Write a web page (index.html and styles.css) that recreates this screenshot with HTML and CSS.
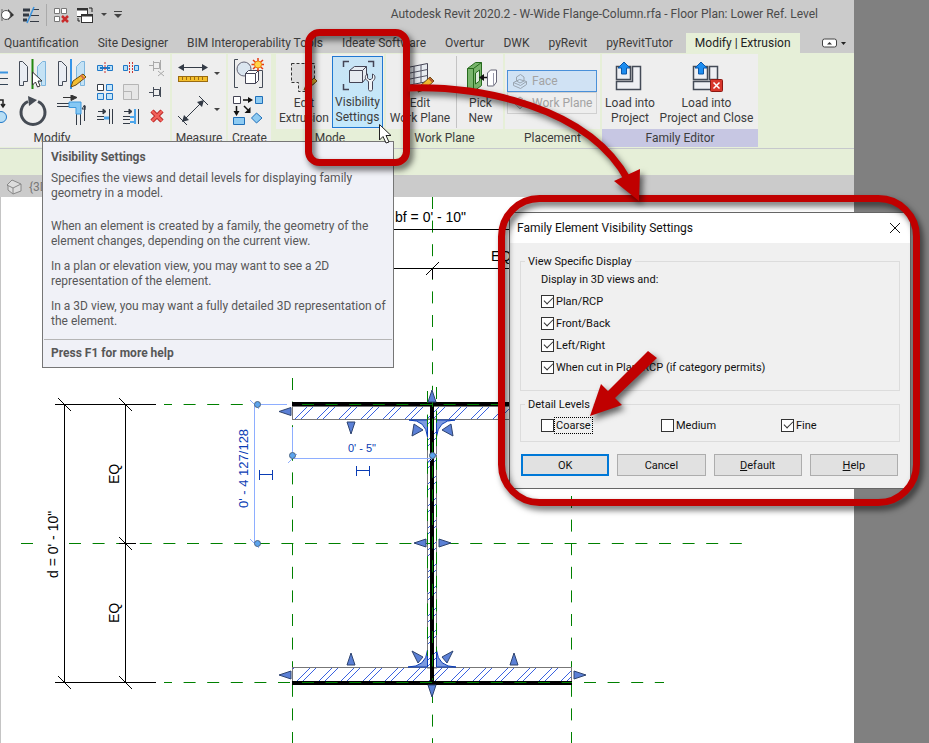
FILE: index.html
```
<!DOCTYPE html>
<html lang="en">
<head>
  <meta charset="UTF-8">
  <meta name="viewport" content="width=device-width, initial-scale=1.0">
  <title>Autodesk Revit 2020.2 - Family Element Visibility Settings</title>
  <link rel="stylesheet" href="styles.css">
</head>
<body>

<div class="app">
  <header class="titlebar">
    <div class="quick-access">
      <button class="icon-btn" aria-label="Section">
        <svg width="16" height="18" viewBox="0 0 16 18"><path d="M2 3v12" stroke="#666"/><path d="M8 3l6 6-6 5z" fill="#333"/><circle cx="6" cy="9" r="4.500" fill="#fff" stroke="#555"/></svg>
      </button>
      <button class="icon-btn" aria-label="Thin lines">
        <svg width="18" height="18" viewBox="0 0 18 18"><path d="M1 4h7M1 9h6M1 14h4" stroke="#333a44" stroke-width="3"/><path d="M11 3.500h6M9 9.500h8M8 15.500h9" stroke="#333a44"/><path d="M12 1L5 17" stroke="#3b94e0" stroke-width="1.500"/></svg>
      </button>
      <span class="bar-sep"></span>
      <button class="icon-btn" aria-label="Close inactive views">
        <svg width="18" height="18" viewBox="0 0 18 18"><g fill="#fff" stroke="#777"><path d="M1.500 2.500h5v5h-5zM8.500 2.500h5v5h-5zM1.500 10.500h5v5h-5z"/></g><path d="M9 10l6 6M15 10l-6 6" stroke="#c92b2b" stroke-width="2.500"/></svg>
      </button>
      <button class="icon-btn" aria-label="Switch windows">
        <svg width="18" height="18" viewBox="0 0 18 18"><rect x="-.5" y="2.500" width="11" height="8" fill="#fff" stroke="#333"/><path d="M-1 3.500h12" stroke="#333" stroke-width="2"/><rect x="4.500" y="8.500" width="11" height="8" fill="#fff" stroke="#333"/><path d="M4 9.500h12" stroke="#333" stroke-width="2"/><path d="M12 2h3v4M1 12v3h2" fill="none" stroke="#222"/></svg>
      </button>
      <span class="caret"></span>
      <svg width="10" height="8" viewBox="0 0 10 8"><path d="M1 .5h8" stroke="#444"/><path d="M1 3h8L5 7z" fill="#444"/></svg>
    </div>
    <div class="window-title">Autodesk Revit 2020.2 - W-Wide Flange-Column.rfa - Floor Plan: Lower Ref. Level</div>
  </header>

  <nav class="tabs">
    <a href="#">Quantification</a>
    <a href="#">Site Designer</a>
    <a href="#">BIM Interoperability Tools</a>
    <a href="#">Ideate Software</a>
    <a href="#">Overtur</a>
    <a href="#">DWK</a>
    <a href="#">pyRevit</a>
    <a href="#">pyRevitTutor</a>
    <a href="#" class="active">Modify | Extrusion</a>
    <button class="icon-btn ribbon-toggle" aria-label="Minimize ribbon">
      <svg width="26" height="10" viewBox="0 0 26 10"><rect x=".5" y="1" width="14" height="8" rx="2" fill="#fff" stroke="#444"/><path d="M5 6.500L7.500 4 10 6.500z" fill="#333"/><path d="M19 4h5l-2.500 3z" fill="#222"/></svg>
    </button>
  </nav>

  <div class="ribbon">
    <section class="panel panel-modify">
      <div class="panel-body">
        <div class="tool-col cut">
          <button class="tool" aria-label="Align"><svg width="8" height="32" viewBox="0 0 8 32"><path d="M0 14.500h8" stroke="#3b94e0" stroke-width="2"/><path d="M0 20.500h8M0 26.500h8" stroke="#345"/></svg></button>
          <button class="tool" aria-label="Copy"><svg width="8" height="32" viewBox="0 0 8 32"><path d="M0 5h3v6M1 9l2 3 2-3" fill="none" stroke="#222" stroke-width="1.500"/><circle cx="1" cy="22" r="5.500" fill="#b8def5" stroke="#1f78c8"/></svg></button>
        </div>
        <div class="tool-col">
          <button class="tool" aria-label="Mirror pick axis"><svg width="32" height="32" viewBox="0 0 32 32"><path d="M3.500 3.500h3l5 5v15h-4v4h-4z" fill="#e9edf3" stroke="#444b57"/><path d="M29.500 3.500h-3l-5 5v15h4v4h4z" fill="#c4e2f5" stroke="#7db5dd"/><path d="M16.500 1v30" stroke="#23890f" stroke-width="2"/><path d="M16.500 14v13l3-3 2 5 2.500-1-2-5h4z" fill="#fff" stroke="#333"/></svg></button>
          <button class="tool" aria-label="Rotate"><svg width="32" height="32" viewBox="0 0 32 32"><path d="M22 6.500a12 12 0 1 1-10 0" fill="none" stroke="#454b54" stroke-width="3"/><path d="M12 1l9 4-8 6z" fill="#454b54"/></svg></button>
        </div>
        <div class="tool-col">
          <button class="tool" aria-label="Mirror draw axis"><svg width="32" height="32" viewBox="0 0 32 32"><path d="M4.500 3.500h3l5 5v15h-4v4h-4z" fill="#e9edf3" stroke="#444b57"/><path d="M30.500 3.500h-3l-5 5v15h4v4h4z" fill="#c4e2f5" stroke="#7db5dd"/><path d="M17 1v30" stroke="#3594e8" stroke-width="2"/><path d="M17 29l2-6 10-7 3 3-10 8z" fill="#f3bd31" stroke="#6b4a12"/><path d="M27 17l3 4" stroke="#d46a4a" stroke-width="2"/></svg></button>
          <button class="tool" aria-label="Trim"><svg width="32" height="32" viewBox="0 0 32 32"><path d="M9 2.500h11M17 0l6 2.500-6 3z" fill="#333" stroke="#333"/><path d="M3 8.500h12M3 11.500h12M22.500 18v12M26.500 18v12M30.500 26V11M28 14l2.500-4 2 4z" fill="none" stroke="#333b46"/><path d="M15 7h12v12h-5v-6.500h-7z" fill="#86c8f4" stroke="#3c98dd"/></svg></button>
        </div>
        <div class="tool-grid">
          <button class="tool" aria-label="Split element"><svg width="18" height="18" viewBox="0 0 18 18"><path d="M1.500 6.500h5v5h-5zM11.500 6.500h5v5h-5z" fill="#b8def5" stroke="#1f78c8"/><path d="M4 9h10" stroke="#1f78c8" stroke-width="2"/><path d="M9 3v12" stroke="#c33" stroke-dasharray="2 1"/></svg></button>
          <button class="tool" aria-label="Split with gap"><svg width="18" height="18" viewBox="0 0 18 18"><path d="M1.500 6.500h4v5h-4zM12.500 6.500h4v5h-4z" fill="#b8def5" stroke="#1f78c8"/><path d="M7.500 3v12M10.500 3v12" stroke="#c33" stroke-dasharray="2 1"/></svg></button>
          <button class="tool" aria-label="Unpin"><svg width="18" height="18" viewBox="0 0 18 18"><path d="M1 6.500h4M5.500 2v10M5.500 3.500h6v6h-6M12.500 1v10M10 12l6 5M16 12l-6 5" fill="none" stroke="#aaa"/></svg></button>
          <button class="tool" aria-label="Array"><svg width="18" height="18" viewBox="0 0 18 18"><path d="M1.500 1.500h6v6h-6z" fill="#fff" stroke="#333b46"/><path d="M10.500 1.500h6v6h-6zM1.500 10.500h6v6h-6zM10.500 10.500h6v6h-6z" fill="#c4e5fa" stroke="#1f78c8"/></svg></button>
          <button class="tool" aria-label="Scale"><svg width="18" height="18" viewBox="0 0 18 18"><path d="M1.500 1.500h15v15h-15zM1.500 8.500h8v8" fill="#e6e6e6" stroke="#b5b5b5"/></svg></button>
          <button class="tool" aria-label="Pin"><svg width="18" height="18" viewBox="0 0 18 18"><path d="M1 9.500h4M5.500 4v10M5.500 6.500h6v6h-6M12.500 4v10" fill="none" stroke="#444b57"/></svg></button>
          <button class="tool" aria-label="Trim single"><svg width="18" height="18" viewBox="0 0 18 18"><path d="M2 4.500h7M7 2l3 2.500L7 7zM13.500 2v15M16.500 2v15M1 9.500h7M1 12.500h7" fill="#333" stroke="#333b46"/><path d="M8 11h5" stroke="#4ca5ea" stroke-width="3"/></svg></button>
          <button class="tool" aria-label="Trim multiple"><svg width="18" height="18" viewBox="0 0 18 18"><path d="M2 4.500h7M7 2l3 2.500L7 7zM13.500 2v15M16.500 2v15M1 9.500h7M1 12.500h7M1 16.500h7" fill="#333" stroke="#333b46"/><path d="M8 10h5M8 15h5M13 2v15" stroke="#4ca5ea" stroke-width="2"/></svg></button>
          <button class="tool" aria-label="Delete"><svg width="18" height="18" viewBox="0 0 18 18"><path d="M4 4l10 10M14 4L4 14" stroke="#b51f1f" stroke-width="4.500"/><path d="M4 4l10 10M14 4L4 14" stroke="#f0605a" stroke-width="2.500"/></svg></button>
        </div>
      </div>
      <h2>Modify</h2>
    </section>

    <section class="panel panel-measure">
      <div class="panel-body">
        <div class="tool-col">
          <button class="tool" aria-label="Measure"><svg width="32" height="32" viewBox="0 0 32 32"><path d="M5 9.500h22" stroke="#333b46"/><path d="M1 9.500l6-3.500v7zM31 9.500l-6-3.500v7z" fill="#333b46"/><rect x="1.500" y="18.500" width="29" height="5" fill="#f4bf2b" stroke="#9a6b10"/><path d="M5.500 19v3M9.500 19v3M13.500 19v3M17.500 19v3M21.500 19v3M25.500 19v3" stroke="#9a6b10"/></svg></button>
          <button class="tool" aria-label="Aligned dimension"><svg width="32" height="32" viewBox="0 0 32 32"><path d="M7 25L25 7M1 21l9 9M22 1l9 9" stroke="#333b46"/><path d="M5 27l2-7 5 5zM27 5l-2 7-5-5z" fill="#333b46"/></svg></button>
        </div>
        <div class="tool-col caret-col">
          <span class="caret"></span>
          <span class="caret"></span>
        </div>
      </div>
      <h2>Measure</h2>
    </section>

    <section class="panel panel-create">
      <div class="panel-body">
        <div class="tool-col">
          <button class="tool" aria-label="Create similar"><svg width="32" height="32" viewBox="0 0 32 32"><path d="M6 1.500H2.500v28H6M27 12.500h3.500v17H27" fill="none" stroke="#444b57"/><circle cx="12" cy="11" r="7" fill="#dbe6f0" stroke="#667"/><path d="M13.500 15.500l3-3h10v10l-3 3h-10z" fill="#fff" stroke="#445"/><path d="M13.500 15.500h10v10M23.500 15.500l3-3" fill="none" stroke="#445"/><path d="M26 0v13M19.500 6.500h13M21 2l10 9M31 2l-10 9" stroke="#e63b12" stroke-width="1.500"/><circle cx="26" cy="6.500" r="3.500" fill="#ffd54a" stroke="#ee8012"/></svg></button>
          <button class="tool" aria-label="Create group"><svg width="32" height="32" viewBox="0 0 32 32"><path d="M1.500 1.500h7v7h-7z" fill="#fff" stroke="#445"/><path d="M23.500 1.500h7v7h-7zM1.500 22.500h11v7h-11zM24.500 18l5.500 5-5.500 5-5-5z" fill="#8ecbf2" stroke="#1f6fb8"/><path d="M11 5h6M4.500 11v6M12 11l4 4" stroke="#111" stroke-width="1.500"/><path d="M16 2l5 3-5 3zM1.500 16h6l-3 5zM18.500 12v6h-6z" fill="#111"/></svg></button>
        </div>
      </div>
      <h2>Create</h2>
    </section>

    <section class="panel panel-mode green">
      <div class="panel-body">
        <button class="big-tool edit-extrusion">
          <svg width="32" height="32" viewBox="0 0 32 32"><path d="M3.500 2.500h23v21h-7v7h-9v-9h-7z" fill="#ddd" stroke="#333" stroke-dasharray="3 2"/><path d="M16 29l2-5 8-7 3 3-8 7z" fill="#f3bd31" stroke="#6b4a12"/></svg>
          <span>Edit<br>Extrusion</span>
        </button>
        <button class="big-tool selected visibility">
          <svg width="36" height="32" viewBox="0 0 36 32"><path d="M3.500 7V1.500H9M28 1.500h5.500V7M3.500 24v5.500H9" fill="none" stroke="#445" stroke-width="1.500"/><path d="M9.500 10.500l5-4h12v11l-4 5h-13z" fill="#e6ebf1" stroke="#445"/><path d="M9.500 10.500h13v12M22.500 10.500l4-4" fill="none" stroke="#445"/><path d="M27.500 14v4l1.500 1.500h2l1.500-1.500v-4c3 1 3.500 5 0 7.500v8c0 2-4 2-4 0v-8c-4-2-4-6-1-7.500z" fill="#f1f4f7" stroke="#445"/></svg>
          <span>Visibility<br>Settings</span>
        </button>
      </div>
      <h2>Mode</h2>
    </section>

    <section class="panel panel-workplane green">
      <div class="panel-body">
        <button class="big-tool edit-plane">
          <svg width="32" height="32" viewBox="0 0 32 32"><path d="M3.500 6.500l20-4v18l-20 4z" fill="#e7ebf0" stroke="#445"/><path d="M10 5v18M17 4v18M3.500 12.500l20-4M3.500 18.500l20-4" stroke="#556"/><path d="M14 31l2-6 10-9 4 4-10 9z" fill="#f3bd31" stroke="#6b4a12"/><path d="M25 17l4 4" stroke="#b35a30" stroke-width="2"/></svg>
          <span>Edit<br>Work Plane</span>
        </button>
        <span class="panel-sep"></span>
        <button class="big-tool pick-new">
          <svg width="32" height="32" viewBox="0 0 32 32"><path d="M2.500 7.500l8-6h6v23l-8 6h-6z" fill="#79b56c" stroke="#256a1d"/><path d="M2.500 7.500h6v23M8.500 7.500l8-6" fill="none" stroke="#256a1d"/><path d="M10.500 12l4-3v11l-4 3z" fill="#dce8da" stroke="#256a1d"/><path d="M16 16.500h6" stroke="#111" stroke-width="1.500"/><path d="M14 16.500l5-3.500v7z" fill="#111"/><path d="M22.500 12l3-3h6v12l-3 4h-6z" fill="#fff" stroke="#667"/><path d="M28.500 12v12" stroke="#99a"/></svg>
          <span>Pick<br>New</span>
        </button>
      </div>
      <h2>Work Plane</h2>
    </section>

    <section class="panel panel-placement green">
      <div class="panel-body">
        <button class="wide-tool on" disabled>
          <svg width="16" height="16" viewBox="0 0 16 16"><path d="M1.500 9.500l6-3 7 2-6 4zM1.500 9.500v3l7 3 6-4v-3M4.500 8V4l4-2.500L12 4v4l-4 2z" fill="none" stroke="#9aa5b0"/></svg>
          Face
        </button>
        <button class="wide-tool" disabled>
          <svg width="16" height="16" viewBox="0 0 16 16"><path d="M1 7l7-5 7 5-7 7z" fill="#ccc" stroke="#aaa"/><path d="M4 5l8 6M12 4l-8 6" stroke="#eee"/></svg>
          Work Plane
        </button>
      </div>
      <h2>Placement</h2>
    </section>

    <section class="panel panel-family">
      <div class="panel-body">
        <button class="big-tool load">
          <svg width="32" height="32" viewBox="0 0 32 32"><path d="M2.500 5.500h14v13h-14zM2.500 20.500h16v-15h8v23h-24z" fill="#eef0f4" stroke="#444b57" stroke-width="1.500"/><path d="M10 1l6 6h-3.500v6h-5V7H4z" fill="#1c8df0" stroke="#0b57a8"/></svg>
          <span>Load into<br>Project</span>
        </button>
        <button class="big-tool load-close">
          <svg width="32" height="32" viewBox="0 0 32 32"><path d="M2.500 5.500h14v13h-14zM18.500 5.500h8v13h-8zM2.500 20.500h24v8h-24z" fill="#eef0f4" stroke="#444b57" stroke-width="1.500"/><path d="M10 1l6 6h-3.500v6h-5V7H4z" fill="#1c8df0" stroke="#0b57a8"/><rect x="19.500" y="18.500" width="12" height="12" rx="1" fill="#d8362b" stroke="#8d1812"/><path d="M22.500 21.500l6 6M28.500 21.500l-6 6" stroke="#fff" stroke-width="1.500"/></svg>
          <span>Load into<br>Project and Close</span>
        </button>
      </div>
      <h2>Family Editor</h2>
    </section>
  </div>

  <div class="options-bar"></div>

  <div class="view-tabs">
    <svg width="16" height="16" viewBox="0 0 16 16"><path d="M1 6l5-5 9 4v7l-8 3-5-4V7z" fill="#ddd" stroke="#888"/><path d="M1 6l6 3 8-4M7 9v6" fill="none" stroke="#888"/></svg>
    <span>{3D}</span>
  </div>

  <main class="drawing">
    <svg width="854" height="546" viewBox="0 197 854 546">
      <defs>
        <pattern id="hatch" width="22" height="22" patternUnits="userSpaceOnUse">
          <path d="M-1 11L11-1M9 23L23 9M-1 17L17-1M15 23l8-8" class="hatch-line"/>
        </pattern>
      </defs>

      <!-- reference planes -->
      <g class="plane">
        <path d="M21 543.500h13M69 543.500h673"/>
        <path d="M160 404.500h94M160 682.500h134" class="from-dim"/>
        <path d="M584 682.500h80M292.500 378v365M571.500 496v247M432.500 197v193M432.500 691v52"/>
      </g>

      <!-- column section -->
      <rect x="292.500" y="406.500" width="279" height="13" class="flange"/>
      <rect x="292.500" y="667.500" width="279" height="14" class="flange"/>
      <rect x="427.500" y="419" width="9" height="249" class="flange"/>
      <path d="M409 420q17 0 18.500 17v-17zM455 420q-17 0-18.500 17v-17zM408 667q18 0 19.500-17v17zM456 667q-18 0-19.500-17v17z" class="fillet"/>
      <path d="M292 404h280M292 683h280M432 404v279" stroke="#000" stroke-width="4"/>
      <g class="plane">
        <path d="M302 404.500h270M302 682.500h270M432.500 395v285M427.500 391v265M436.500 387v265"/>
      </g>

      <!-- permanent dimensions -->
      <g class="dim">
        <path d="M64.500 404v279M125.500 404v279M55 404.500h101M55 682.500h101M119 543.500h17"/>
        <path d="M58 398l13 13M119 398l13 13M119 537l13 13M58 676l13 13M119 676l13 13M426 275l13-13"/>
        <path d="M380 229.500h180M380 268.500h180M432.500 268v11"/>
      </g>
      <g class="dim-text">
        <text x="395" y="222">bf = 0' - 10"</text>
        <text x="491" y="261">EQ</text>
        <text transform="translate(119 484) rotate(-90)">EQ</text>
        <text transform="translate(119 623) rotate(-90)">EQ</text>
        <text transform="translate(58 578) rotate(-90)">d = 0' - 10"</text>
      </g>

      <!-- temporary dimensions -->
      <g class="temp-dim">
        <path d="M254.500 404v140M254 404.500h33M292.500 427v31M292 458.500h141M250 400l9 9M250 539l9 9M288 463l9-9M428 463l9-9"/>
        <circle cx="257.500" cy="404.500" r="3"/>
        <circle cx="257.500" cy="543.500" r="3"/>
        <circle cx="292.500" cy="455.500" r="3"/>
        <circle cx="432.500" cy="455.500" r="3"/>
      </g>
      <path d="M259.500 470v10M272.500 470v10M260 474.500h12M356.500 466v10M369.500 466v10M357 470.500h12" stroke="#0a3cb4"/>
      <text class="temp-text" transform="translate(248 508) rotate(-90)">0' - 4 127/128</text>
      <text class="temp-text small" x="348" y="452">0' - 5"</text>

      <!-- shape handles -->
      <path class="handle" d="M279 411.500l12-4v8zM432 390l4 12h-8zM347 422h8l-4 12zM412 436l2-12 9 6zM453 436l-2-12-9 6zM414 543l12-4v8zM451 543l-12-4v8zM279 675l12-4v8zM586 675l-12-4v8zM351 653l4 12h-8zM514 653l4 12h-8zM412 651l11 6-5 6zM453 651l-11 6 5 6zM428 685h8l-4 12z"/>
    </svg>
  </main>
</div>

<aside class="help-tip">
  <h3>Visibility Settings</h3>
  <p class="lead">Specifies the views and detail levels for displaying family geometry in a model.</p>
  <p>When an element is created by a family, the geometry of the element changes, depending on the current view.</p>
  <p>In a plan or elevation view, you may want to see a 2D representation of the element.</p>
  <p>In a 3D view, you may want a fully detailed 3D representation of the element.</p>
  <footer>Press F1 for more help</footer>
</aside>

<form class="dialog" role="dialog" aria-labelledby="dialog-title">
  <div class="dialog-head">
    <span id="dialog-title">Family Element Visibility Settings</span>
    <button type="button" class="icon-btn" aria-label="Close">
      <svg width="12" height="12" viewBox="0 0 12 12"><path d="M1 1l10 10M11 1L1 11" stroke="#111"/></svg>
    </button>
  </div>
  <div class="dialog-body">
    <fieldset class="display-set">
      <legend>View Specific Display</legend>
      <p>Display in 3D views and:</p>
      <label><input type="checkbox" checked><span>Plan/RCP</span></label>
      <label><input type="checkbox" checked><span>Front/Back</span></label>
      <label><input type="checkbox" checked><span>Left/Right</span></label>
      <label><input type="checkbox" checked><span>When cut in Plan/RCP (if category permits)</span></label>
    </fieldset>
    <fieldset class="detail-set">
      <legend>Detail Levels</legend>
      <label><input type="checkbox"><span class="focused">Coarse</span></label>
      <label><input type="checkbox"><span>Medium</span></label>
      <label><input type="checkbox" checked><span>Fine</span></label>
    </fieldset>
    <div class="dialog-buttons">
      <button type="button" class="primary">OK</button>
      <button type="button">Cancel</button>
      <button type="button"><u>D</u>efault</button>
      <button type="button"><u>H</u>elp</button>
    </div>
  </div>
</form>

<!-- red callouts and mouse pointer -->
<svg class="callouts" width="929" height="743" viewBox="0 0 929 743">
  <g class="callout">
    <rect x="308.500" y="32.500" width="98" height="130" rx="11"/>
    <rect x="501.500" y="198.500" width="415" height="304" rx="38"/>
  </g>
  <g class="callout">
    <path d="M408 88C480 86 588 106 628 180"/>
    <path class="head" d="M640 169l-26 12 25 20z"/>
  </g>
  <path class="callout head" d="M590 416l11-32 7 7 40-40 9 7-42 40 7 7z"/>
  <path d="M379.500 124.500v15.500l3.500-3.500 3 6.500 3-1-3-6.500h5z" fill="#fff" stroke="#222"/>
</svg>

</body>
</html>
```
FILE: styles.css
```
* {
  box-sizing: border-box;
}

body {
  margin: 0;
  position: relative;
  height: 100vh;
  overflow: hidden;
  background: #808080;
  color: #3c3c3c;
  font-family: Roboto, "Segoe UI", sans-serif;
  font-size: 12px;
  line-height: 15px;
}

svg {
  display: block;
  fill: none;
  flex: none;
}

button {
  font: inherit;
  color: inherit;
  padding: 0;
  border: 0;
  background: none;
}

h2, h3, p {
  margin: 0;
}

.app {
  display: flex;
  flex-direction: column;
  height: 100%;
  margin-right: 75px;
  background: #cbcbcb;
}

/* title bar */
.titlebar {
  display: flex;
  justify-content: space-between;
  align-items: center;
  height: 33px;
  padding: 0 36px 4px 0;
}

.quick-access {
  display: flex;
  align-items: center;
  gap: 6px;
}

.bar-sep {
  width: 1px;
  height: 22px;
  background: #aaa;
}

.window-title {
  color: #4a4a4a;
  white-space: nowrap;
}

.caret {
  width: 0;
  border: 3px solid transparent;
  border-top-color: #444;
  border-bottom: 0;
}

/* ribbon tabs */
.tabs {
  display: flex;
  height: 20px;
  padding-right: 6px;
}

.tabs a {
  padding: 3px 9px 0 10px;
  color: #3c3c3c;
  text-decoration: none;
  white-space: nowrap;
}

.tabs a:first-child {
  padding-left: 4px;
}

.tabs .active {
  margin-left: 4px;
  padding: 3px 9px 0;
  background: #e6efd8;
  color: #222;
}

.ribbon-toggle {
  margin-left: auto;
}

/* ribbon */
.ribbon {
  display: flex;
  gap: 2px;
  height: 96px;
  padding-top: 1px;
  background: #e6efd8;
  border-bottom: 1px solid #c6c8cc;
}

.panel {
  display: flex;
  flex-direction: column;
  height: 93px;
  background: #eee;
}

.panel h2 {
  height: 18px;
  padding-top: 2px;
  font-size: 12px;
  font-weight: normal;
  text-align: center;
}

.panel-body {
  display: flex;
  height: 75px;
  padding-top: 2px;
}

.green h2 {
  background: #e6efd8;
}

.panel-modify { width: 170px; }
.panel-modify h2 { padding-right: 66px; }
.panel-measure { width: 54px; }
.panel-create { width: 43px; }
.panel-mode { width: 108px; margin-left: 3px; }
.panel-workplane { width: 117px; }
.panel-placement { width: 95px; }
.panel-family { width: 156px; }
.panel-family h2 { background: #c7c7e3; }

.tool-col {
  display: flex;
  flex-direction: column;
  gap: 5px;
  padding: 2px 3px;
}

.tool-col.cut {
  padding: 2px 5px 2px 0;
}

.panel-measure .tool-col {
  padding: 2px 0 2px 5px;
}

.panel-create .tool-col {
  padding: 2px 4px;
}

.panel-measure .caret-col {
  gap: 33px;
  padding: 16px 5px;
}

.tool-grid {
  display: grid;
  grid-template-columns: repeat(3, 18px);
  grid-auto-rows: 18px;
  gap: 6px 8px;
  padding: 3px 7px;
}

.big-tool {
  height: 72px;
  padding-top: 2px;
  white-space: nowrap;
}

.big-tool svg {
  margin: 0 auto 3px;
}

.selected {
  border: 1px solid #1f78d1;
  background: linear-gradient(#c9e4f5, #c3e8fb);
}

.big-tool.selected {
  padding-top: 1px;
}

.edit-extrusion { width: 56px; }
.visibility { width: 51px; }
.edit-plane { width: 68px; }
.pick-new { width: 45px; }
.load { width: 56px; }
.load-close { width: 97px; }

.panel-sep {
  width: 1px;
  height: 72px;
  margin: 0 1px 0 2px;
  background: #c4c4c4;
}

.panel-placement .panel-body {
  flex-direction: column;
  padding: 16px 3px 0 2px;
}

.wide-tool {
  display: flex;
  align-items: center;
  gap: 4px;
  height: 22px;
  padding-left: 4px;
  border: 1px solid #d0d0d0;
  color: #a3a3a3;
  white-space: nowrap;
}

.wide-tool.on {
  border-color: #4a90d9;
  background: #d0e2f4;
}

.options-bar {
  height: 26px;
  background: #e6efd8;
}

.view-tabs {
  display: flex;
  align-items: center;
  gap: 7px;
  height: 22px;
  padding: 2px 6px 0;
  color: #777;
}

/* drawing area */
.drawing {
  flex: 1;
  min-height: 0;
  overflow: hidden;
  background: #fff;
  box-shadow: inset 1px 0 #c4c4c4;
}

.plane {
  stroke: #008000;
  stroke-dasharray: 12 11.600;
}

.from-dim {
  clip-path: inset(0 0 0 4px);
}

.flange {
  fill: url(#hatch);
  stroke: #777;
}

.hatch-line {
  stroke: #3a62e0;
  shape-rendering: crispEdges;
}

.fillet {
  fill: #7c9ae0;
  stroke: #0a3cb4;
}

.dim {
  stroke: #000;
}

.dim-text {
  fill: #000;
  font: 14px "Liberation Sans", Arial, sans-serif;
}

.temp-dim {
  stroke: #8eaeff;
}

.temp-dim circle {
  fill: #5ca4ee;
  stroke: #4d6480;
}

.temp-text {
  fill: #0a3cb4;
  font: 13px "Liberation Sans", Arial, sans-serif;
}

.temp-text.small {
  font-size: 11px;
}

.handle {
  fill: #5b80d6;
  stroke: #2e4470;
}

/* ribbon tooltip */
.help-tip {
  position: absolute;
  left: 42px;
  top: 141px;
  width: 352px;
  height: 227px;
  padding: 8px 1px 0;
  border: 1px solid #767676;
  background: #f0f1f7;
  color: #575757;
}

.help-tip h3 {
  padding: 0 7px;
  font-size: 12px;
}

.help-tip p {
  padding: 0 2px 0 7px;
  margin-bottom: 10px;
}

.help-tip .lead {
  margin: 6px 0 18px;
}

.help-tip footer {
  padding: 6px 7px;
  border-top: 1px solid #b5b5b5;
  font-weight: bold;
}

/* dialog */
.dialog {
  position: absolute;
  left: 509px;
  top: 212px;
  width: 402px;
  border: 1px solid #666;
  background: #f0f0f0;
  color: #111;
  font-size: 11px;
}

.dialog-head {
  display: flex;
  justify-content: space-between;
  align-items: center;
  height: 30px;
  padding: 0 9px 0 7px;
  background: #fff;
  font-size: 12px;
}

.dialog-body {
  padding: 11px 10px 12px;
}

fieldset {
  min-width: 0;
  margin: 0;
  border: 1px solid #dcdcdc;
}

legend {
  padding: 0 3px;
}

.display-set {
  height: 137px;
  padding: 3px 20px;
}

.display-set legend,
.detail-set legend {
  margin-left: -16px;
}

.display-set p {
  margin-bottom: 3px;
}

.detail-set {
  display: flex;
  height: 45px;
  margin-top: 6px;
  padding: 2px 0 2px 20px;
}

.detail-set label {
  width: 120px;
}

.detail-set label:last-child {
  width: auto;
}

label {
  display: flex;
  align-items: center;
  gap: 1px;
  height: 22px;
}

label span {
  padding: 0 1px;
}

.focused {
  outline: 1px dotted #000;
}

input[type="checkbox"] {
  appearance: none;
  position: relative;
  flex: none;
  width: 13px;
  height: 13px;
  margin: 0;
  border: 1px solid #333;
  background: #fff;
}

input[type="checkbox"]:checked::after {
  content: "";
  position: absolute;
  left: 2px;
  top: 1px;
  width: 8px;
  height: 4px;
  border: solid #333;
  border-width: 0 0 1px 1px;
  transform: rotate(-45deg);
}

.dialog-buttons {
  display: grid;
  grid-template-columns: repeat(4, 1fr);
  gap: 8px;
  margin-top: 12px;
  padding: 0 2px 0 1px;
}

.dialog-buttons button {
  height: 22px;
  border: 1px solid #adadad;
  background: #e1e1e1;
}

.dialog-buttons .primary {
  border: 2px solid #0078d7;
}

/* callouts */
.callouts {
  position: absolute;
  left: 0;
  top: 0;
  pointer-events: none;
}

.callout {
  fill: none;
  stroke: #c00000;
  stroke-width: 7;
  filter: drop-shadow(3px 4px 3px rgba(0, 0, 0, 0.6));
}

.head {
  fill: #c00000;
  stroke: none;
}
```
